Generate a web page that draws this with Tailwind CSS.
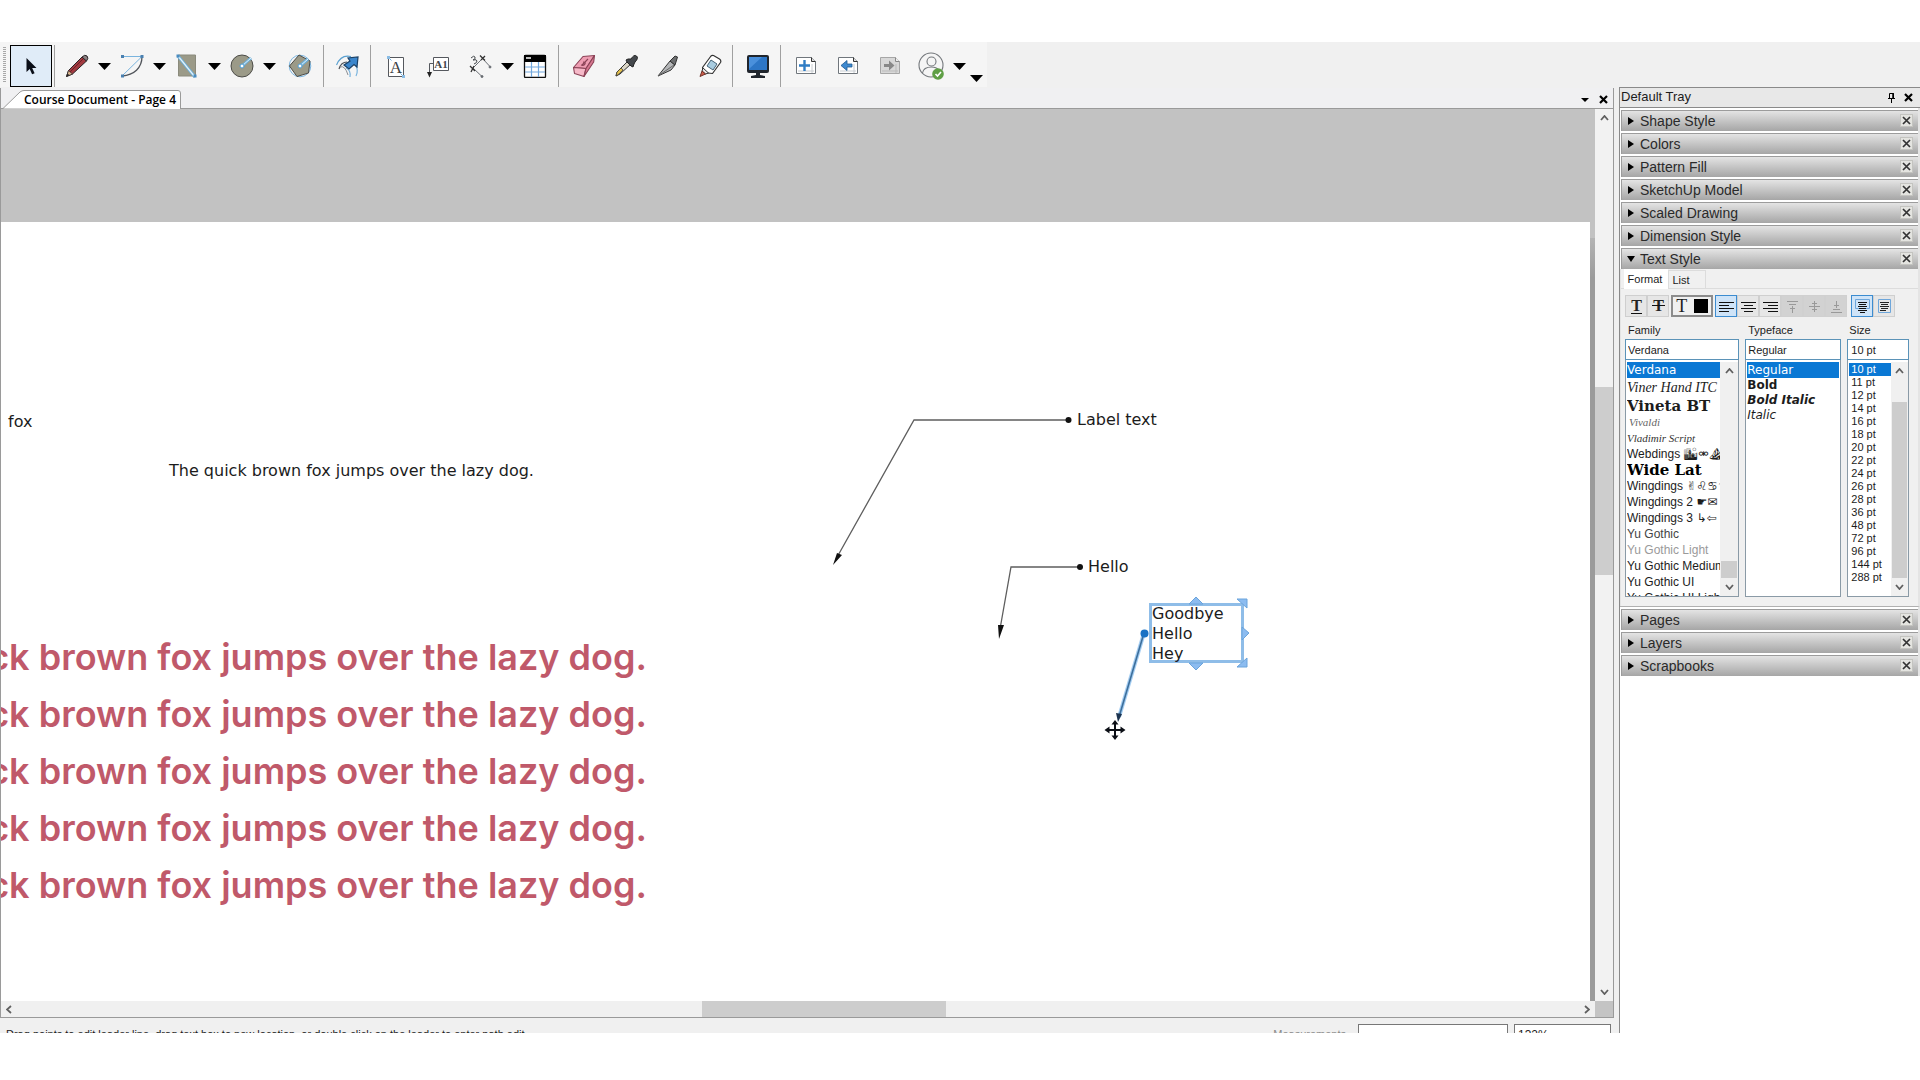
<!DOCTYPE html>
<html lang="en">
<head>
<meta charset="utf-8">
<title>Course Document - Page 4</title>
<script src="https://cdn.jsdelivr.net/npm/@tailwindcss/browser@4"></script>
</head>
<body class="flex h-screen flex-col overflow-hidden bg-white pt-[42px] pb-[47px] font-['Liberation_Sans',Arial,sans-serif] text-[#1c1c1c]">

<!-- Toolbar -->
<header class="flex h-[46px] shrink-0 border-b border-[#9a9a9a] bg-[#f0f0f0]">
  <div class="flex items-end bg-[#f5f5f5] pr-1 [&>button]:flex [&>button]:h-[42px] [&>button]:items-center [&>button]:justify-center" role="toolbar" aria-label="Tools">
    <span class="mr-1 mb-1 ml-[3px] h-9 w-[3px] bg-[repeating-linear-gradient(#a8a8a8_0_1px,transparent_1px_2px)]"></span>
    <button aria-label="Select" aria-pressed="true" class="w-[42px] border border-black bg-[#e0ecf8]"><svg width="24" height="24" viewBox="0 0 24 24"><path d="M7.500 4v14l3.200-3 2.400 5.300 2.500-1.100-2.400-5.200h4.300z" fill="#0b0f18"/></svg></button>
    <span class="mr-px ml-0.5 h-[42px] w-px bg-[#a0a0a0]"></span>
    <button aria-label="Line" class="w-[42px]"><svg width="24" height="24" viewBox="0 0 24 24"><path d="M1.500 22.500l2-6L17 3l4.500 4L7.500 20z" fill="#a23a40" stroke="#2a2426"/><path d="M1.500 22.500l2-6 4 3.500z" fill="#d8b48c" stroke="#2a2426" stroke-width=".7"/><path d="M1.500 22.500l1-3 2 1.800z" fill="#222"/><path d="M17 3q3-3 5-1t-.5 5z" fill="#8a8082" stroke="#2a2426"/><path d="M5 18L18 5" stroke="#6e2026"/></svg></button>
    <button aria-label="Line options" class="w-[13px]"><svg width="13" height="7" viewBox="0 0 13 7"><path d="M0 0h13L6.500 7z"/></svg></button>
    <button aria-label="Arc" class="w-[42px]"><svg width="24" height="24" viewBox="0 0 24 24" fill="none"><path d="M2 2.500h20M2 22L22 2.500" stroke="#7ab4de"/><path d="M22 2.500C22 14 14 21 2 22" stroke="#50545a" stroke-width="1.300"/><g fill="#4a80b0"><rect x="1" y="1" width="3" height="3"/><rect x="20.500" y="1" width="3" height="3"/><rect x="1" y="20.500" width="3" height="3"/></g></svg></button>
    <button aria-label="Arc options" class="w-[13px]"><svg width="13" height="7" viewBox="0 0 13 7"><path d="M0 0h13L6.500 7z"/></svg></button>
    <button aria-label="Rectangle" class="w-[42px]"><svg width="24" height="24" viewBox="0 0 24 24" fill="none"><path d="M3.500 1h17v21h-17z" fill="#9b9a88" stroke="#8a8a7c"/><path d="M3 2l17 21" stroke="#6cb0dc" stroke-width="3"/><path d="M3 2l17 21" stroke="#e4f2fa" stroke-width="1.200"/><path d="M1.500.5h3v3h-3zM18.500 20.500h3v3h-3z" fill="#4a8cc0"/></svg></button>
    <button aria-label="Rectangle options" class="w-[13px]"><svg width="13" height="7" viewBox="0 0 13 7"><path d="M0 0h13L6.500 7z"/></svg></button>
    <button aria-label="Circle" class="w-[42px]"><svg width="24" height="24" viewBox="0 0 24 24" fill="none"><circle cx="12" cy="12" r="11" fill="#9b9a88" stroke="#4c4c48"/><path d="M12 12l9-8" stroke="#6cb0dc" stroke-width="3"/><path d="M12 12l9-8" stroke="#e4f2fa"/><circle cx="12" cy="12" r="2" fill="#fff" stroke="#4a9cd4"/></svg></button>
    <button aria-label="Circle options" class="w-[13px]"><svg width="13" height="7" viewBox="0 0 13 7"><path d="M0 0h13L6.500 7z"/></svg></button>
    <button aria-label="Polygon" class="ml-[3px] w-[42px]"><svg width="24" height="24" viewBox="0 0 24 24" fill="none"><circle cx="12" cy="12" r="10.800" stroke="#7ab4de"/><path d="M11 1l11 6-1.500 12L9 22.500 1.500 12z" fill="#9b9a88" stroke="#4c4c48"/><path d="M12 12l8-7" stroke="#6cb0dc" stroke-width="3"/><path d="M12 12l8-7" stroke="#e4f2fa"/><circle cx="12" cy="12" r="2" fill="#fff" stroke="#4a9cd4"/></svg></button>
    <span class="mr-[3px] ml-0.5 h-[42px] w-px bg-[#a0a0a0]"></span>
    <button aria-label="Offset" class="w-[42px]"><svg width="24" height="24" viewBox="0 0 24 24" fill="none"><path d="M.5 11Q5 0 15 2.500" stroke="#5aa0d0" stroke-width="1.200"/><path d="M3 15q2-7 8-7" stroke="#50545a" stroke-width="1.200"/><path d="M10 14q5 2 4 9M19 10q4 6 1 12" stroke="#7ab4de" stroke-width="1.200"/><path d="M4 13q5-2 8 8" stroke="#8a8e94"/><path d="M8 11l6-4-2-3L22 3l-1 10-3-2.500L13 15z" fill="#3b86cc" stroke="#1a4066" stroke-width="1.200"/></svg></button>
    <span class="mr-1 ml-px h-[42px] w-px bg-[#a0a0a0]"></span>
    <button aria-label="Text" class="w-[42px]"><svg width="24" height="24" viewBox="0 0 24 24" fill="none"><path d="M4.500 3.500h15v19h-15z" fill="#fff" stroke="#55585e"/><text x="12" y="19" text-anchor="middle" font-family="Liberation Serif" font-size="17" fill="#3c3e42">A</text><path d="M3.500 2.500l4 4M20.500 23.500l-4-4" stroke="#6cb0dc"/><path d="M3 2h3v3H3zM18 21h3v3h-3z" fill="#8abce4"/></svg></button>
    <button aria-label="Label" class="w-[42px]"><svg width="24" height="24" viewBox="0 0 24 24" fill="none"><path d="M7.500 3.500h15v13h-15z" fill="#fff" stroke="#55585e"/><text x="15" y="14" text-anchor="middle" font-family="Liberation Serif" font-weight="bold" font-size="11" fill="#44464a">A1</text><path d="M7 9.500H3.500V19" stroke="#55585e"/><path d="M1 18h5l-2.500 5.500z" fill="#222"/></svg></button>
    <button aria-label="Dimension" class="w-[42px]"><svg width="24" height="24" viewBox="0 0 24 24" fill="none" stroke="#6c7076"><path d="M5 14l9 8.500M14 4l7.500 8M4 15L15 4"/><path d="M2 12l5 5M12 1.500l5 5M3 18l3-6M13 6l4-4" stroke="#333" stroke-width="1.300"/><path d="M3 4q3-3 4-1t-2 3q4-1 4 1t-3 3" stroke="#44484c"/><circle cx="14" cy="22.500" r="1" fill="#5c6066"/><circle cx="22" cy="13" r="1" fill="#5c6066"/></svg></button>
    <button aria-label="Dimension options" class="w-[13px]"><svg width="13" height="7" viewBox="0 0 13 7"><path d="M0 0h13L6.500 7z"/></svg></button>
    <button aria-label="Table" class="w-[42px]"><svg width="24" height="24" viewBox="0 0 24 24"><rect x="1.500" y="1.500" width="21" height="22" rx="1" fill="#fff" stroke="#111" stroke-width="1.300"/><path d="M1 1h22v7H1z"/><path d="M3 4h5" stroke="#fff" stroke-width="1.500"/><path d="M8.500 8v15M15.500 8v15M2 13h20M2 18h20" stroke="#72a8de" stroke-width="1.200"/></svg></button>
    <span class="mr-1 ml-0.5 h-[42px] w-px bg-[#a0a0a0]"></span>
    <button aria-label="Eraser" class="w-[42px]"><svg width="24" height="24" viewBox="0 0 24 24" stroke="#8a4256" stroke-width="1.100" stroke-linejoin="round"><path d="M1.500 13.500L11 2.500l11.500-1-8.500 13z" fill="#ee9db2"/><path d="M1.500 13.500l12.500 1-2 8-9.500-3z" fill="#f6b9c8"/><path d="M22.500 1.500l-.8 6.500L12 22.500l2-8z" fill="#d77890"/><path d="M11 8q3 0 2 2t-4 1M10 11l6-6" fill="none"/></svg></button>
    <button aria-label="Style eyedropper" class="w-[42px]"><svg width="24" height="24" viewBox="0 0 24 24"><path d="M2 22l1-4L14 7l3 3L6 20z" fill="#d9d4c4" stroke="#333"/><path d="M2 22l1-4 4-4 2 2-4 4z" fill="#e3c04c" stroke="#333" stroke-width=".7"/><path d="M12 6l2-1 3 0q3-5 5.500-3t-1.500 6l-1 2-1 3-2-1-4-4z" fill="#44484c" stroke="#222"/></svg></button>
    <button aria-label="Split" class="w-[42px]"><svg width="24" height="24" viewBox="0 0 24 24" stroke="#333" stroke-linejoin="round"><path d="M2 22L14 7l5 4-4 5z" fill="#b4b6b8"/><path d="M2 22L18 11" fill="none" stroke="#666"/><path d="M14 7l5-5 2.500 1L19 11z" fill="#6c6e70"/></svg></button>
    <button aria-label="Join" class="w-[42px]"><svg width="24" height="24" viewBox="0 0 24 24" stroke-linejoin="round"><path d="M13 2q1-1 2.500-.5l6 3.500q2 1.500 1 3.500l-8 11-9-1-1-5z" fill="#fff" stroke="#333" stroke-width="1.200"/><path d="M13 6l6 4-4 6-6-4z" fill="#a8cce0" stroke="#466478"/><path d="M5 14l5.500 5-3 1-3.500-3z" fill="#e8e8e8" stroke="#333"/><path d="M4 17l3.500 3L2 22.500z" fill="#cc5d4a" stroke="#70322a"/></svg></button>
    <span class="mr-1 ml-px h-[42px] w-px bg-[#a0a0a0]"></span>
    <button aria-label="Start presentation" class="w-[42px]"><svg width="24" height="24" viewBox="0 0 24 24"><rect x="1" y="1" width="22" height="18" rx="2" fill="#20252c"/><path d="M3 3h18v13H3z" fill="#2d76c6"/><path d="M3 3h13L3 15z" fill="#4a90dc"/><path d="M10 19h4v2l5 1v2H5v-2l5-1z" fill="#20252c"/></svg></button>
    <span class="mr-1 ml-px h-[42px] w-px bg-[#a0a0a0]"></span>
    <button aria-label="Add page" class="w-[42px]"><svg width="24" height="24" viewBox="0 0 24 24"><path d="M2.500 3.500h15l4 4v12h-19z" fill="#fff" stroke="#70767c"/><path d="M17.500 3.500v4h4" fill="#dcdcdc" stroke="#333"/><path d="M4 17h16M18 10v9" stroke="#c8ccd0"/><path d="M10.500 6v11M5 11.500h11" stroke="#2f7cc4" stroke-width="2.400"/></svg></button>
    <button aria-label="Previous page" class="w-[42px]"><svg width="24" height="24" viewBox="0 0 24 24"><path d="M2.500 3.500h15l4 4v12h-19z" fill="#fff" stroke="#70767c"/><path d="M17.500 3.500v4h4" fill="#dcdcdc" stroke="#333"/><path d="M4 17h16M18 10v9" stroke="#c8ccd0"/><path d="M5 11.500l6-5V10h5v3h-5v3.500z" fill="#3f8ad0" stroke="#205a92" stroke-width=".8"/></svg></button>
    <button aria-label="Next page" disabled class="w-[42px]"><svg width="24" height="24" viewBox="0 0 24 24"><path d="M2.500 3.500h15l4 4v12h-19z" fill="#d8d8d8" stroke="#a6a6a6"/><path d="M17.500 3.500v4h4" fill="#eee" stroke="#888"/><path d="M4 17h16M18 10v9" stroke="#bbb"/><path d="M16.500 11.500l-5.500-5V10H6v3h5v3.500z" fill="#888"/></svg></button>
    <button aria-label="Account" class="w-[42px]"><svg width="28" height="28" viewBox="0 0 28 28" fill="none" stroke="#74787c" stroke-width="1.100"><circle cx="13" cy="13" r="12"/><circle cx="13.500" cy="9.500" r="4.500"/><path d="M4.500 21q1-6 9-6 5 0 7 3"/><circle cx="20" cy="22" r="5.800" fill="#5f9f45" stroke="none"/><path d="M17.500 22l2 2 3.500-4" stroke="#fff" stroke-width="1.600"/></svg></button>
    <button aria-label="Account options" class="w-[13px]"><svg width="13" height="7" viewBox="0 0 13 7"><path d="M0 0h13L6.500 7z"/></svg></button>
    <button aria-label="More tools" class="ml-1 w-[13px] pt-6"><svg width="13" height="7" viewBox="0 0 13 7"><path d="M0 0h13L6.500 7z"/></svg></button>
  </div>
</header>

<div class="-mt-px flex min-h-0 flex-1">
  <!-- Document column -->
  <div class="flex min-w-0 flex-1 flex-col bg-[#f0f0f0] pt-px">
    <main class="mr-[5px] flex min-h-0 flex-1 flex-col border-r border-b border-l border-[#9a9a9a]">
      <div class="flex h-[21px] shrink-0 items-end border-b border-[#9a9a9a] bg-[#f0f0f2]">
        <a href="#page" class="relative -mb-px ml-0.5 flex h-[19px] w-[178px] items-center pl-[21px] font-['Open_Sans','Noto_Sans',sans-serif] text-xs leading-[18px] font-semibold whitespace-nowrap text-black">
          <svg class="absolute inset-0" width="178" height="19" viewBox="0 0 178 19"><path d="M0 18.500L17 2Q19 .5 21 .5h154q2.500 0 2.500 2.500v16" fill="#fff" stroke="#9a9a9a"/></svg>
          <span class="relative">Course Document - Page 4</span>
        </a>
        <div class="mb-1 ml-auto flex items-center gap-2.5 pr-[5px]">
          <button aria-label="List documents" class="flex"><svg width="8" height="4" viewBox="0 0 8 4"><path d="M0 0h8L4 4z"/></svg></button>
          <button aria-label="Close document" class="flex"><svg width="9" height="9" viewBox="0 0 9 9"><path d="M1 1l7 7M8 1L1 8" stroke="#000" stroke-width="2.200"/></svg></button>
        </div>
      </div>
      <div class="flex min-h-0 flex-1">
        <!-- Drawing canvas -->
        <div class="relative flex min-w-0 flex-1 overflow-hidden bg-[#c2c2c2] pt-[113px] font-['DejaVu_Sans',Verdana,sans-serif] text-base leading-5" id="page">
          <div class="flex-1 bg-white"></div>
          <div class="mt-4 w-[5px] bg-linear-to-b from-[#b4b4b4] to-[#9b9b9b] to-[40px]"></div>
          <svg class="absolute top-0 left-0" width="1300" height="880" viewBox="1 109 1300 880" fill="none">
            <g stroke="#5e5e5e" stroke-width="1.300"><path d="M1068 420H914L836 559M1080 567h-69l-11 62"/></g>
            <g fill="#111"><circle cx="1068.500" cy="420" r="3"/><circle cx="1080" cy="567" r="3"/><path d="M833 565l4-12 5 2zM999 639l-1-14h6z"/></g>
            <path d="M1144 633l-25 84" stroke="#a4cdf2" stroke-width="4"/>
            <path d="M1144 633l-25 84" stroke="#3d6f9c" stroke-width="1.600"/>
            <path d="M1118 722l-2-9 6 1z" fill="#1c3450"/>
            <circle cx="1144.500" cy="633.500" r="4" fill="#1a72c4"/>
            <path d="M1150.500 604.500h92v57h-92z" stroke="#8fbde8" stroke-width="3"/>
            <g fill="#8cbcf0" stroke="#6ba4dc" stroke-width="1"><path d="M1189 604l7-7 7 7zM1189 663l7 7 7-7zM1242 627l7 6-7 7zM1237 599h10v9zM1247 658v9h-10z"/></g>
            <path d="M1115 720l3.500 4.500h-2.500v4.500h4.500v-2.500l5 3.500-5 3.500v-2.500h-4.500v4.500h2.500l-3.500 4.500-3.500-4.500h2.500v-4.500h-4.500v2.500l-5-3.500 5-3.500v2.500h4.500v-4.500h-2.500z" fill="#0c0f16"/>
          </svg>
          <p class="absolute top-[303px] left-[7px]">fox</p>
          <p class="absolute top-[352px] left-[168px] whitespace-nowrap">The quick brown fox jumps over the lazy dog.</p>
          <p class="absolute top-[301px] left-[1076px] whitespace-nowrap">Label text</p>
          <p class="absolute top-[448px] left-[1087px]">Hello</p>
          <p class="absolute top-[495px] left-[1151px]">Goodbye<br>Hello<br>Hey</p>
          <div class="absolute top-[520px] left-0 flex w-[646px] flex-col items-end overflow-hidden font-[Inter,'Liberation_Sans',sans-serif] text-4xl leading-[57px] font-semibold whitespace-nowrap text-[#c0596a]">
            <p class="leading-[57px]">The quick brown fox jumps over the lazy dog.</p>
            <p class="leading-[57px]">The quick brown fox jumps over the lazy dog.</p>
            <p class="leading-[57px]">The quick brown fox jumps over the lazy dog.</p>
            <p class="leading-[57px]">The quick brown fox jumps over the lazy dog.</p>
            <p class="leading-[57px]">The quick brown fox jumps over the lazy dog.</p>
          </div>
        </div>
        <div class="flex w-[18px] flex-col items-center bg-[#f2f2f2]">
          <button aria-label="Scroll up" class="flex h-[18px] items-center"><svg width="9" height="6" viewBox="0 0 9 6" fill="none"><path d="M1 5l3.500-4L8 5" stroke="#606060" stroke-width="1.800"/></svg></button>
          <div class="flex w-full flex-1 flex-col pt-[260px]"><div class="h-[188px] bg-[#cdcdcd]"></div></div>
          <button aria-label="Scroll down" class="flex h-[18px] items-center"><svg width="9" height="6" viewBox="0 0 9 6" fill="none"><path d="M1 1l3.500 4L8 1" stroke="#606060" stroke-width="1.800"/></svg></button>
        </div>
      </div>
      <div class="flex h-4 shrink-0 bg-[#f0f0f0]">
        <button aria-label="Scroll left" class="flex w-4 items-center justify-center"><svg width="6" height="9" viewBox="0 0 6 9" fill="none"><path d="M5 1L1 4.500 5 8" stroke="#606060" stroke-width="1.800"/></svg></button>
        <div class="flex flex-1 pl-[685px]"><div class="w-[244px] bg-[#cdcdcd]"></div></div>
        <button aria-label="Scroll right" class="flex w-4 items-center justify-center"><svg width="6" height="9" viewBox="0 0 6 9" fill="none"><path d="M1 1l4 3.500L1 8" stroke="#606060" stroke-width="1.800"/></svg></button>
        <div class="w-[18px] bg-[#c4c4c4]"></div>
      </div>
    </main>
    <!-- Status bar, cut off by the window edge -->
    <footer class="flex h-[15px] shrink-0 items-start overflow-hidden pr-2 text-[11px] leading-4 whitespace-nowrap">
      <p class="pt-2 pl-1.5">Drag points to edit leader line, drag text box to new location, or double click on the leader to enter path edit.</p>
      <label for="measure" class="mr-3 ml-auto pt-2 text-[#8a8a8a]">Measurements</label>
      <input id="measure" class="mt-1.5 h-[22px] w-[150px] border border-[#777] bg-white">
      <select aria-label="Zoom" class="mt-1.5 ml-1.5 h-[22px] w-[97px] appearance-none border border-[#777] bg-white pl-[3px] text-xs leading-4"><option>132%</option></select>
    </footer>
  </div>

  <!-- Tray -->
  <aside class="flex w-[301px] shrink-0 flex-col border-t border-l border-[#8a8a8a] bg-white">
    <div class="flex h-5 shrink-0 items-center border-b border-[#8a8a8a] bg-[#e8e8e8] pr-[7px] pb-px pl-px text-[13px] leading-4">
      <h1>Default Tray</h1>
      <button aria-label="Pin tray" class="ml-auto"><svg width="9" height="11" viewBox="0 0 9 11" fill="none" stroke="#000"><path d="M2.500 6V1.500h4V6M1 6.500h7M4.500 7v4"/><path d="M6 1v5" stroke-width="1.500"/></svg></button>
      <button aria-label="Close tray" class="ml-2"><svg width="9" height="9" viewBox="0 0 9 9"><path d="M1 1l7 7M8 1L1 8" stroke="#000" stroke-width="2.200"/></svg></button>
    </div>
    <div id="top" class="flex flex-col gap-0.5 border-r-2 border-[#e4e4e4] pt-0.5 pl-px"></div>
    <section class="border-r-2 border-l border-[#e4e4e4] bg-[#f0f0f0] px-1 pb-[9px] text-[11px] leading-4">
      <div class="-mx-1 flex items-end border-b border-[#dcdcdc] pl-[3px]" role="tablist">
        <button role="tab" aria-selected="true" class="-mb-px h-5 w-11 bg-white pr-0.5 leading-4">Format</button>
        <button role="tab" class="h-[18px] w-[38px] border-t border-r border-l border-[#dcdcdc] pr-3 leading-4">List</button>
      </div>
      <div id="fmt" class="mt-1.5 flex h-[22px]"></div>
      <div class="mt-1 grid grid-cols-[113fr_95fr_61fr] gap-1.5 pr-[5px]">
        <div class="min-w-0">
          <label for="family" class="block h-[18px] pl-[3px] leading-[18px]">Family</label>
          <input id="family" value="Verdana" class="block h-[21px] w-full border border-[#5b93b8] bg-white px-0.5 leading-4">
          <div class="flex h-[237px] border border-t-0 border-[#8a9aa6] bg-white pt-0.5">
            <ul role="listbox" aria-label="Font family" class="min-w-0 flex-1 overflow-hidden pl-px text-xs leading-4 whitespace-nowrap [&>li]:h-4 [&>li]:overflow-hidden">
              <li role="option" aria-selected="true" class="bg-[#0a78d4] font-['DejaVu_Sans',sans-serif] text-white">Verdana</li>
              <li role="option" class="my-0.5 font-['Liberation_Serif',serif] text-[14px] leading-4 italic">Viner Hand ITC</li>
              <li role="option" class="font-['DejaVu_Serif',serif] text-[15px] leading-4 font-bold">Vineta BT</li>
              <li role="option" class="pl-0.5 font-['Liberation_Serif',serif] text-[11px] leading-4 text-[#666] italic">Vivaldi</li>
              <li role="option" class="font-['Liberation_Serif',serif] text-[11px] leading-4 text-[#333] italic">Vladimir Script</li>
              <li role="option">Webdings <span class="font-['DejaVu_Sans',sans-serif]">🏙⚮⛰</span></li>
              <li role="option" class="font-['DejaVu_Serif',serif] text-[15px] leading-4 font-bold text-black">Wide Lat</li>
              <li role="option">Wingdings <span class="font-['DejaVu_Sans',sans-serif]">✌♌♋☜</span></li>
              <li role="option">Wingdings 2 <span class="font-['DejaVu_Sans',sans-serif]">☛✉</span></li>
              <li role="option">Wingdings 3 <span class="font-['DejaVu_Sans',sans-serif]">↳⇦</span></li>
              <li role="option" class="text-[#444]">Yu Gothic</li>
              <li role="option" class="text-[#9a9a9a]">Yu Gothic Light</li>
              <li role="option">Yu Gothic Medium</li>
              <li role="option">Yu Gothic UI</li>
              <li role="option">Yu Gothic UI Light</li>
            </ul>
            <div class="flex w-[18px] flex-col items-center bg-[#f0f0f0]">
              <button aria-label="Scroll families up" class="flex h-[18px] items-center"><svg width="9" height="6" viewBox="0 0 9 6" fill="none"><path d="M1 5l3.500-4L8 5" stroke="#606060" stroke-width="1.800"/></svg></button>
              <div class="flex w-full flex-1 flex-col justify-end px-px"><div class="h-[17px] bg-[#cdcdcd]"></div></div>
              <button aria-label="Scroll families down" class="flex h-[18px] items-center"><svg width="9" height="6" viewBox="0 0 9 6" fill="none"><path d="M1 1l3.500 4L8 1" stroke="#606060" stroke-width="1.800"/></svg></button>
            </div>
          </div>
        </div>
        <div class="min-w-0">
          <label for="typeface" class="block h-[18px] pl-[3px] leading-[18px]">Typeface</label>
          <input id="typeface" value="Regular" class="block h-[21px] w-full border border-[#5b93b8] bg-white px-0.5 leading-4">
          <ul role="listbox" aria-label="Typefaces" class="h-[237px] border border-t-0 border-[#8a9aa6] bg-white px-px pt-0.5 font-['DejaVu_Sans',sans-serif] text-xs leading-[15px] whitespace-nowrap">
            <li role="option" aria-selected="true" class="h-4 bg-[#0a78d4] leading-4 text-white">Regular</li>
            <li role="option" class="font-bold">Bold</li>
            <li role="option" class="font-bold italic">Bold Italic</li>
            <li role="option" class="italic">Italic</li>
          </ul>
        </div>
        <div class="min-w-0">
          <label for="size" class="block h-[18px] pl-0.5 leading-[18px]">Size</label>
          <input id="size" value="10 pt" class="block h-[21px] w-full border border-[#5b93b8] bg-white px-[3px] leading-4">
          <div class="flex h-[237px] border border-t-0 border-[#8a9aa6] bg-white pt-0.5">
            <ul id="sizes" role="listbox" aria-label="Font size" class="min-w-0 flex-1 pt-px pl-px leading-[13px] whitespace-nowrap"></ul>
            <div class="flex w-[17px] flex-col items-center bg-[#f0f0f0]">
              <button aria-label="Scroll sizes up" class="flex h-[18px] items-center"><svg width="9" height="6" viewBox="0 0 9 6" fill="none"><path d="M1 5l3.500-4L8 5" stroke="#606060" stroke-width="1.800"/></svg></button>
              <div class="flex w-full flex-1 flex-col px-px pt-[22px]"><div class="flex-1 bg-[#cdcdcd]"></div></div>
              <button aria-label="Scroll sizes down" class="flex h-[18px] items-center"><svg width="9" height="6" viewBox="0 0 9 6" fill="none"><path d="M1 1l3.500 4L8 1" stroke="#606060" stroke-width="1.800"/></svg></button>
            </div>
          </div>
        </div>
      </div>
    </section>
    <div id="bottom" class="flex flex-col gap-0.5 border-t border-r-2 border-[#e4e4e4] border-t-[#b0b0b0] pt-0.5 pl-px"></div>
  </aside>
</div>

<script>
const header = (name, open) => `
  <div class="flex h-[21px] items-center border-t border-l border-[#9c9c9c] bg-linear-to-b from-[#e4e4e4] to-[#a6a6a6] pr-[5px] pb-px pl-[5px] text-sm leading-[18px] text-[#2a2a2a]">
    <button class="flex items-center gap-[5px]" aria-expanded="${open}">
      <svg width="8" height="8" viewBox="0 0 8 8"><path d="${open ? 'M0 1h8L4 7z' : 'M1 0l6 4-6 4z'}"/></svg>${name}
    </button>
    <button aria-label="Close ${name}" class="ml-auto flex h-[13px] w-[13px] items-center justify-center border border-[#c4c4c0] bg-[#e4e4e0]">
      <svg width="9" height="9" viewBox="0 0 9 9"><path d="M1 1l7 7M8 1L1 8" stroke="#333" stroke-width="1.700"/></svg>
    </button>
  </div>`;
document.getElementById('top').innerHTML =
  ['Shape Style', 'Colors', 'Pattern Fill', 'SketchUp Model', 'Scaled Drawing', 'Dimension Style'].map(n => header(n, false)).join('') + header('Text Style', true);
document.getElementById('bottom').innerHTML = ['Pages', 'Layers', 'Scrapbooks'].map(n => header(n, false)).join('');

document.getElementById('sizes').innerHTML =
  [10, 11, 12, 14, 16, 18, 20, 22, 24, 26, 28, 36, 48, 72, 96, 144, 288].map((s, i) =>
    `<li role="option" class="${i ? 'pl-0.5' : 'bg-[#0a78d4] pl-0.5 text-white'}">${s} pt</li>`).join('');

const plain = 'border-[#cfcfcf] bg-[#e6e6e6]', on = 'border-[#3c8cd0] bg-[#cfe4f8]', off = 'border-[#d0d0d0] bg-[#d2d2d2]';
const svg = (d, c = '#111', extra = '') => `<svg width="19" height="19" viewBox="0 0 19 19" fill="none" stroke="${c}">${extra}<path d="${d}"/></svg>`;
const T = '<text x="9.500" y="14" text-anchor="middle" font-family="Liberation Serif" font-weight="bold" font-size="16" fill="#222" stroke="none">T</text>';
const box = '<path d="M3.500 2.500h12v13h-12z" stroke="#6ea6da"/>';
const tools = [
  ['Underline', plain, svg('M4 16.500h11', '#111', T)],
  ['Strikethrough', plain, svg('M3 8.500h13', '#111', T)],
  null,
  ['Align left', on, svg('M2 5.500h15M2 8.500h10M2 11.500h15M2 14.500h10')],
  ['Align center', plain, svg('M2 5.500h15M5 8.500h9M2 11.500h15M5 14.500h9')],
  ['Align right', plain, svg('M2 5.500h15M7 8.500h10M2 11.500h15M7 14.500h10')],
  ['Anchor top', off, svg('M4 4.500h11M6 7.500h7M9.500 9v7M7 11.500h5', '#999')],
  ['Anchor middle', off, svg('M4 9.500h11M9.500 4v11M7 6.500h5M7 12.500h5', '#999')],
  ['Anchor bottom', off, svg('M4 15.500h11M6 12.500h7M9.500 4v7M7 8.500h5', '#999')],
  ['Unbounded text', on, svg('M5 5.500h9M6 7.500h7M5 9.500h9M6 11.500h7M5 13.500h9M7 15.500h5', '#111', '<path d="M2.500 2.500h14v9h-14z" stroke="#6ea6da"/>')],
  ['Bounded text', plain, svg('M5 5.500h9M6 7.500h7M5 9.500h9M6 11.500h7M5 13.500h6', '#222', box)],
];
document.getElementById('fmt').innerHTML = tools.map((t, i) => t
  ? `<button aria-label="${t[0]}" class="flex w-[22px] items-center justify-center border ${t[1]} ${i === 9 ? 'ml-1' : ''}">${t[2]}</button>`
  : `<button aria-label="Text color" class="mx-[2px] flex w-[42px] items-center justify-around border-2 border-[#8c8c8c] bg-[#f0f0f0] font-['Liberation_Serif',serif] text-lg leading-4">T<span class="h-[14px] w-[14px] bg-black"></span></button>`).join('');
</script>
</body>
</html>
